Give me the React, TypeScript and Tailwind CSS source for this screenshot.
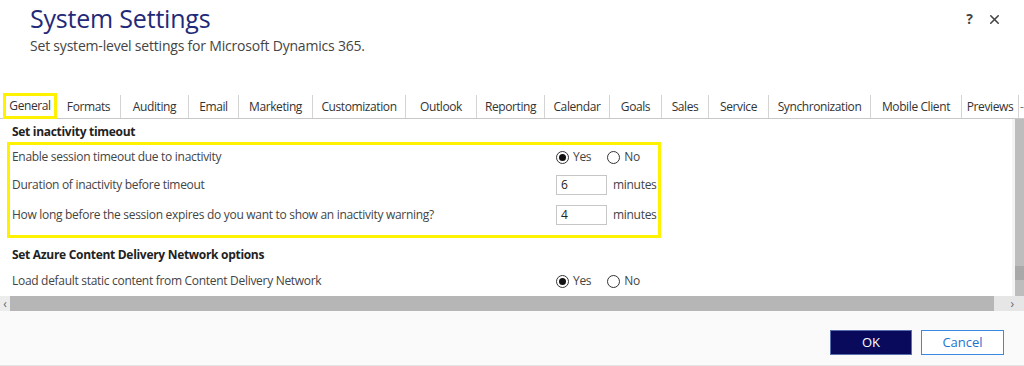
import { X } from 'lucide-react'

const tabs: [string, number][] = [
  ['General', 54],
  ['Formats', 64],
  ['Auditing', 68],
  ['Email', 50],
  ['Marketing', 74],
  ['Customization', 93],
  ['Outlook', 71],
  ['Reporting', 68],
  ['Calendar', 65],
  ['Goals', 52],
  ['Sales', 47],
  ['Service', 60],
  ['Synchronization', 102],
  ['Mobile Client', 91],
  ['Previews', 57],
]

function Radio({ checked, label }: { checked?: boolean; label: string }) {
  return (
    <span className="flex items-center gap-[4px]">
      <span className="w-[13px] h-[13px] rounded-full border border-[#333] flex items-center justify-center bg-white">
        {checked && <span className="w-[7px] h-[7px] rounded-full bg-[#111]" />}
      </span>
      <span>{label}</span>
    </span>
  )
}

function YesNo() {
  return (
    <div className="flex items-center gap-[16px]">
      <Radio checked label="Yes" />
      <Radio label="No" />
    </div>
  )
}

function Minutes({ value }: { value: string }) {
  return (
    <div className="flex items-center gap-[6px]">
      <div className="w-[51px] h-[20px] border border-[#c6c6c6] pl-[4px] flex items-center text-[#222]">{value}</div>
      <span>minutes</span>
    </div>
  )
}

function Row({ label, children, h }: { label: string; children: React.ReactNode; h: string }) {
  return (
    <div className={`flex items-center ${h}`}>
      <div className="w-[544px]">{label}</div>
      {children}
    </div>
  )
}

export default function App() {
  return (
    <div
      className="w-[1024px] h-[366px] bg-white flex flex-col overflow-hidden text-[#444]"
      style={{ fontFamily: '"Open Sans", "Noto Sans", sans-serif' }}
    >
      {/* header */}
      <div className="h-[95px] flex justify-between shrink-0">
        <div className="pl-[30px] pt-[1px]">
          <div className="text-[25px] leading-[34px] text-[#1f2a78] tracking-[-0.2px]">System Settings</div>
          <div className="text-[14px] leading-[20px] text-[#444] mt-[1px] tracking-[-0.2px]">
            Set system-level settings for Microsoft Dynamics 365.
          </div>
        </div>
        <div className="flex items-start gap-[14px] pr-[22px] pt-[9px] text-[#444]">
          <span className="text-[14px] font-bold leading-[20px]">?</span>
          <X size={15} strokeWidth={2.5} className="mt-[3px]" />
        </div>
      </div>

      {/* tabs */}
      <div className="h-[24px] flex border-b border-[#c8c8c8] shrink-0 text-[12px] text-[#333] tracking-[-0.4px] pl-[3px]">
        {tabs.map(([t, w], i) => (
          <div
            key={t}
            style={{ width: w }}
            className={
              i === 0
                ? 'h-[26px] -mt-[2px] border-[3px] border-[#fff200] flex items-center justify-center'
                : 'flex items-center justify-center border-r border-[#d4d4d4]'
            }
          >
            {t}
          </div>
        ))}
        <div className="flex items-center pl-[1px] text-[#777]">-</div>
      </div>

      {/* content */}
      <div className="h-[177px] flex shrink-0">
        <div className="flex-1 pl-[12px] text-[12px] tracking-[-0.3px] pt-[2px]">
          <div className="h-[21px] flex items-center font-bold text-[#222]">Set inactivity timeout</div>
          <div className="-ml-[5px] w-[654px] border-[3px] border-[#fff200] pl-[2px] pb-[6px]">
            <Row label="Enable session timeout due to inactivity" h="h-[24px]">
              <YesNo />
            </Row>
            <Row label="Duration of inactivity before timeout" h="h-[32px]">
              <Minutes value="6" />
            </Row>
            <Row label="How long before the session expires do you want to show an inactivity warning?" h="h-[28px]">
              <Minutes value="4" />
            </Row>
          </div>
          <div className="h-[26px] mt-[4px] flex items-center font-bold text-[#222]">Set Azure Content Delivery Network options</div>
          <div className="flex items-center h-[26px]">
            <div className="w-[544px]">Load default static content from Content Delivery Network</div>
            <YesNo />
          </div>
        </div>
        <div className="w-[12px] bg-[#f4f4f4] flex justify-end">
          <div className="w-[9px] bg-[#bdbdbd] flex flex-col justify-end pb-[16px]">
            <div className="h-[14px] bg-[#a9a9a9]" />
          </div>
        </div>
      </div>

      {/* horizontal scrollbar */}
      <div className="h-[15px] flex shrink-0 bg-[#e8e8e8] text-[#666] text-[12px]">
        <div className="w-[10px] flex items-center justify-center bg-[#ececec]">‹</div>
        <div className="flex-1 bg-[#b6b6b6]" />
        <div className="w-[30px] flex items-center justify-end pr-[10px] bg-[#e6e6e6]">›</div>
      </div>

      {/* footer */}
      <div className="flex-1 flex justify-end items-start pt-[19px] pr-[20px] gap-[9px] bg-[#fafafa] border-b border-[#e4e4e4]">
        <button className="w-[82px] h-[25px] bg-[#0a0a5c] border border-[#5a6fb0] text-white text-[13px]">OK</button>
        <button className="w-[83px] h-[25px] bg-white border border-[#3a8ae0] text-[#1f73cc] text-[13px]">Cancel</button>
      </div>
    </div>
  )
}
